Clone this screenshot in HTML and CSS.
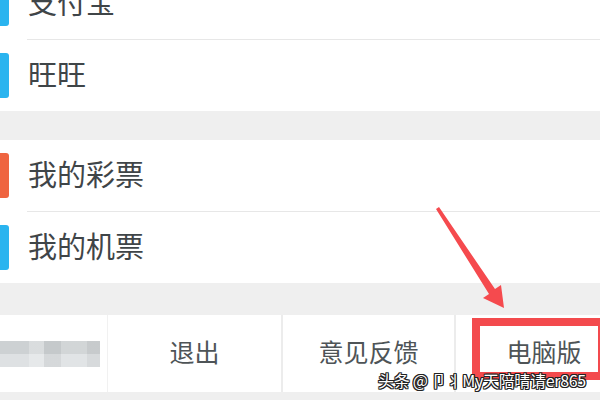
FILE: index.html
```html
<!DOCTYPE html>
<html lang="zh-CN">
<head>
<meta charset="utf-8">
<title>我的</title>
<link rel="stylesheet" href="styles.css">
</head>
<body>
<div class="page">
  <section class="card">
    <div class="row"><span class="mark blue"></span><span class="label">支付宝</span></div>
    <div class="divider"></div>
    <div class="row"><span class="mark blue"></span><span class="label">旺旺</span></div>
  </section>

  <section class="card gap">
    <div class="row"><span class="mark orange"></span><span class="label">我的彩票</span></div>
    <div class="divider"></div>
    <div class="row"><span class="mark blue"></span><span class="label">我的机票</span></div>
  </section>

  <nav class="footer">
    <div class="cell user"><span class="masked"></span></div>
    <div class="cell"><span class="tab">退出</span></div>
    <div class="cell"><span class="tab">意见反馈</span></div>
    <div class="cell"><span class="tab">电脑版</span></div>
  </nav>
</div>

<svg class="arrow" width="90" height="120" viewBox="0 0 90 120">
  <polygon points="6,9 9,7 65,89 71,85 74,108 53,98 59,94" fill="#f54a4e"/>
</svg>
<div class="highlight"></div>
<div class="stamp">头条 @ 卩丬My天陪晴请er865</div>
</body>
</html>
```

FILE: styles.css
```css
html, body {
  margin: 0;
  padding: 0;
}

body {
  width: 600px;
  height: 400px;
  overflow: hidden;
  background: #efefef;
  font-family: "Noto Sans CJK SC", "Noto Sans", sans-serif;
  position: relative;
}

.page {
  margin-top: -32px;
  display: flex;
  flex-direction: column;
}

.card {
  background: #fff;
}

.card.gap {
  margin-top: 29px;
}

.row {
  height: 71px;
  display: flex;
  align-items: center;
}

.mark {
  width: 9px;
  height: 45px;
  border-radius: 0 3px 3px 0;
  flex: none;
}

.mark.blue {
  background: #2ab4ef;
}

.mark.orange {
  background: #ef6440;
}

.label {
  margin-left: 19px;
  margin-bottom: 5px;
  font-size: 29px;
  line-height: 36px;
  color: #3f4548;
}

.divider {
  height: 1px;
  margin-left: 27px;
  background: #e7e7e7;
}

.footer {
  margin-top: 32px;
  margin-left: -66px;
  width: 700px;
  height: 77px;
  background: #fff;
  display: grid;
  grid-template-columns: 174px 175px 173px 178px;
}

.cell {
  display: flex;
  align-items: center;
  justify-content: center;
  border-right: 2px solid #ececec;
}

.tab {
  font-size: 25px;
  line-height: 30px;
  margin-bottom: 5px;
  color: #4e5457;
}

.cell.user {
  justify-content: flex-end;
  padding-right: 7px;
  border-right: 1px solid #f1f1f1;
}

.masked {
  width: 101px;
  height: 26px;
  background:
    linear-gradient(90deg, rgba(255,255,255,0) 0 30px, rgba(255,255,255,0.25) 30px 45px, rgba(0,0,0,0.04) 45px 62px, rgba(255,255,255,0.1) 62px 88px, rgba(0,0,0,0.03) 88px 101px),
    linear-gradient(180deg, #cdd1d3 0 13px, #dee1e3 13px 26px);
  filter: blur(0.6px);
}

.arrow {
  position: absolute;
  left: 430px;
  top: 200px;
}

.highlight {
  position: absolute;
  left: 472px;
  top: 318px;
  width: 134px;
  height: 62px;
  box-sizing: border-box;
  border: 8px solid #f34a4d;
}

.stamp {
  position: absolute;
  left: 378px;
  top: 370px;
  font-size: 16px;
  line-height: 20px;
  color: #fff;
  letter-spacing: -0.3px;
  white-space: nowrap;
  text-shadow:
    -1px 0 0 #222, 1px 0 0 #222, 0 -1px 0 #222, 0 1px 0 #222,
    -1px -1px 0 #222, 1px 1px 0 #222, -1px 1px 0 #222, 1px -1px 0 #222;
}
```
